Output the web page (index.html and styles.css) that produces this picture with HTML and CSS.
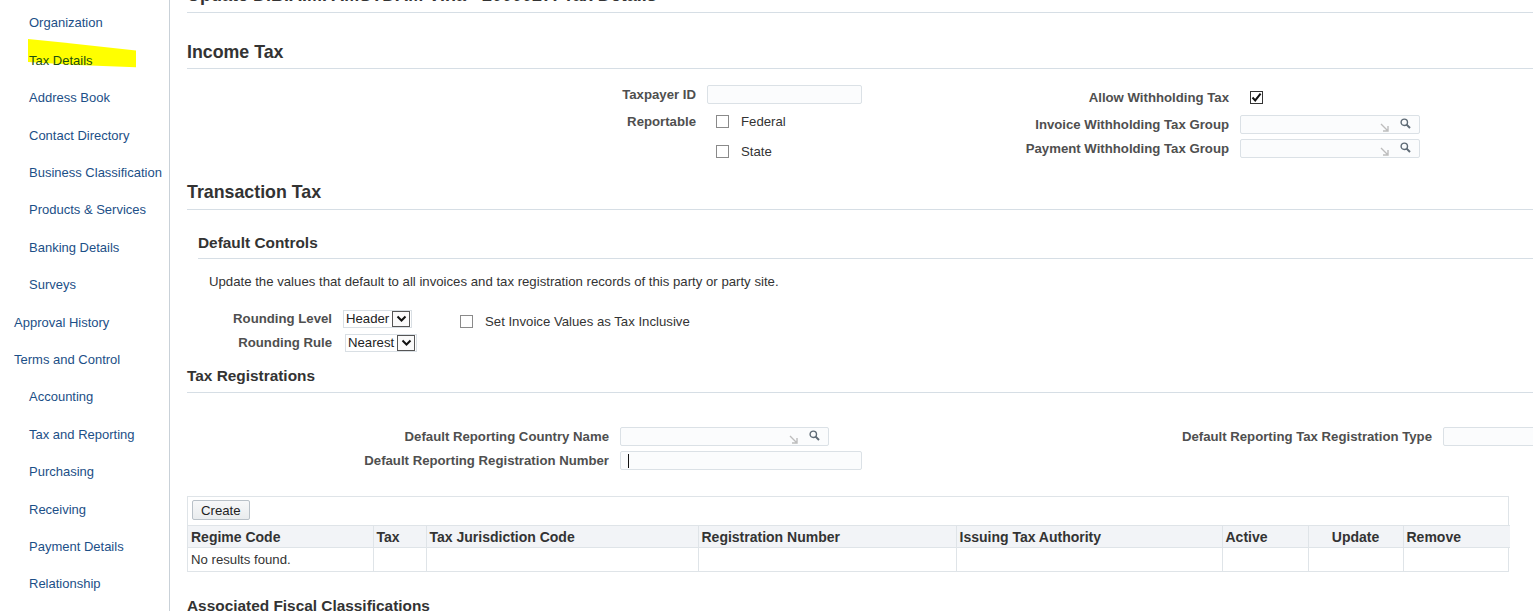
FILE: index.html
```html
<!DOCTYPE html>
<html lang="en">
<head>
    <meta charset="UTF-8">
    <meta name="viewport" content="width=device-width, initial-scale=1.0">
    <title>Tax Details</title>
    <link rel="stylesheet" href="styles.css">
</head>
<body>

    <div class="sidebar">
        <ul class="nav">
            <li class="sub"><a href="#">Organization</a></li>
            <li class="sub"><a href="#" class="current">Tax Details</a></li>
            <li class="sub"><a href="#">Address Book</a></li>
            <li class="sub"><a href="#">Contact Directory</a></li>
            <li class="sub"><a href="#">Business Classification</a></li>
            <li class="sub"><a href="#">Products &amp; Services</a></li>
            <li class="sub"><a href="#">Banking Details</a></li>
            <li class="sub"><a href="#">Surveys</a></li>
            <li><a href="#">Approval History</a></li>
            <li><a href="#">Terms and Control</a></li>
            <li class="sub"><a href="#">Accounting</a></li>
            <li class="sub"><a href="#">Tax and Reporting</a></li>
            <li class="sub"><a href="#">Purchasing</a></li>
            <li class="sub"><a href="#">Receiving</a></li>
            <li class="sub"><a href="#">Payment Details</a></li>
            <li class="sub"><a href="#">Relationship</a></li>
        </ul>
    </div>

    <div class="content">
        <h1 class="page-title">Update D.B.A.M. AMSTDAM Vina - 2000027: Tax Details</h1>

        <h2 class="section-title income-title">Income Tax</h2>

        <div class="income-form">
            <div class="form-grid income-left">
                <label class="label">Taxpayer ID</label>
                <div class="field"><span class="input input-taxpayer"></span></div>

                <label class="label row-reportable">Reportable</label>
                <div class="field row-reportable check-stack">
                    <span class="check-item"><span class="checkbox"></span>Federal</span>
                    <span class="check-item"><span class="checkbox"></span>State</span>
                </div>
            </div>

            <div class="form-grid income-right">
                <label class="label">Allow Withholding Tax</label>
                <div class="field"><span class="checkbox checked">
                    <svg width="13" height="13" viewBox="0 0 13 13"><path d="M2.5 6.5 L5.2 9.4 L10.6 2.6" fill="none" stroke="#111" stroke-width="2"/></svg>
                </span></div>

                <label class="label">Invoice Withholding Tax Group</label>
                <div class="field">
                    <span class="input lookup lookup-group">
                        <svg class="lov-arrow" width="9" height="9" viewBox="0 0 9 9"><path d="M1 1 L7.5 7.5 M3 8 L8 8 L8 3" fill="none" stroke="#bdbdbd" stroke-width="1.4"/></svg>
                        <svg class="lov-search" width="11" height="11" viewBox="0 0 11 11"><circle cx="4.3" cy="4.3" r="3.2" fill="none" stroke="#5f6b76" stroke-width="1.4"/><path d="M6.6 6.6 L10 10" stroke="#5f6b76" stroke-width="2"/></svg>
                    </span>
                </div>

                <label class="label">Payment Withholding Tax Group</label>
                <div class="field">
                    <span class="input lookup lookup-group">
                        <svg class="lov-arrow" width="9" height="9" viewBox="0 0 9 9"><path d="M1 1 L7.5 7.5 M3 8 L8 8 L8 3" fill="none" stroke="#bdbdbd" stroke-width="1.4"/></svg>
                        <svg class="lov-search" width="11" height="11" viewBox="0 0 11 11"><circle cx="4.3" cy="4.3" r="3.2" fill="none" stroke="#5f6b76" stroke-width="1.4"/><path d="M6.6 6.6 L10 10" stroke="#5f6b76" stroke-width="2"/></svg>
                    </span>
                </div>
            </div>
        </div>

        <h2 class="section-title transaction-title">Transaction Tax</h2>

        <h3 class="sub-title controls-title">Default Controls</h3>
        <p class="instruction">Update the values that default to all invoices and tax registration records of this party or party site.</p>

        <div class="rounding">
            <div class="form-grid rounding-grid">
                <label class="label">Rounding Level</label>
                <div class="field">
                    <span class="select"><span class="select-value">Header</span><span class="select-arrow"><svg width="11" height="8" viewBox="0 0 11 8"><path d="M1.5 1.5 L5.5 5.5 L9.5 1.5" fill="none" stroke="#111" stroke-width="2"/></svg></span></span>
                </div>
                <label class="label">Rounding Rule</label>
                <div class="field">
                    <span class="select select-rule"><span class="select-value">Nearest</span><span class="select-arrow"><svg width="11" height="8" viewBox="0 0 11 8"><path d="M1.5 1.5 L5.5 5.5 L9.5 1.5" fill="none" stroke="#111" stroke-width="2"/></svg></span></span>
                </div>
            </div>
            <span class="check-item inclusive"><span class="checkbox"></span>Set Invoice Values as Tax Inclusive</span>
        </div>

        <h3 class="sub-title registrations-title">Tax Registrations</h3>

        <div class="form-grid reg-form">
            <label class="label">Default Reporting Country Name</label>
            <div class="field">
                <span class="input lookup lookup-country">
                    <svg class="lov-arrow" width="9" height="9" viewBox="0 0 9 9"><path d="M1 1 L7.5 7.5 M3 8 L8 8 L8 3" fill="none" stroke="#bdbdbd" stroke-width="1.4"/></svg>
                    <svg class="lov-search" width="11" height="11" viewBox="0 0 11 11"><circle cx="4.3" cy="4.3" r="3.2" fill="none" stroke="#5f6b76" stroke-width="1.4"/><path d="M6.6 6.6 L10 10" stroke="#5f6b76" stroke-width="2"/></svg>
                </span>
            </div>
            <label class="label">Default Reporting Tax Registration Type</label>
            <div class="field"><span class="input input-type"></span></div>

            <label class="label">Default Reporting Registration Number</label>
            <div class="field"><span class="input input-number"><span class="caret"></span></span></div>
        </div>

        <div class="table-box">
            <div class="toolbar">
                <button class="button">Create</button>
            </div>
            <table class="results">
                <thead>
                    <tr>
                        <th class="col-regime">Regime Code</th>
                        <th class="col-tax">Tax</th>
                        <th class="col-jur">Tax Jurisdiction Code</th>
                        <th class="col-reg">Registration Number</th>
                        <th class="col-auth">Issuing Tax Authority</th>
                        <th class="col-active">Active</th>
                        <th class="col-update">Update</th>
                        <th class="col-remove">Remove</th>
                    </tr>
                </thead>
                <tbody>
                    <tr>
                        <td>No results found.</td>
                        <td></td>
                        <td></td>
                        <td></td>
                        <td></td>
                        <td></td>
                        <td></td>
                        <td></td>
                    </tr>
                </tbody>
            </table>
        </div>

        <h3 class="sub-title fiscal-title">Associated Fiscal Classifications</h3>
    </div>

</body>
</html>
```

FILE: styles.css
```css
* {
    margin: 0;
    padding: 0;
    box-sizing: border-box;
}

body {
    font-family: "Liberation Sans", Arial, sans-serif;
    font-size: 13.2px;
    color: #333;
    background: #fff;
    height: 100vh;
    display: flex;
    overflow: hidden;
}

/* left navigation */

.sidebar {
    width: 170px;
    flex-shrink: 0;
    border-right: 1px solid #c9d1d8;
    padding-top: 4.3px;
}

.nav {
    list-style: none;
}

.nav li {
    height: 37.4px;
    display: flex;
    align-items: center;
    padding-left: 14px;
}

.nav li.sub {
    padding-left: 29px;
}

.nav a {
    color: #1c4f87;
    text-decoration: none;
    font-size: 13px;
    white-space: nowrap;
}

.nav a.current {
    position: relative;
    color: #1c4f10;
}

.nav a.current::before {
    content: "";
    position: absolute;
    left: -1px;
    top: -14px;
    width: 108px;
    height: 29px;
    background: #ffff00;
    z-index: -1;
    clip-path: polygon(0 0, 30% 12%, 100% 40%, 100% 98%, 45% 90%, 0 80%);
}

/* main area */

.content {
    flex: 1;
    padding-left: 17px;
    overflow: hidden;
}

.page-title {
    margin-top: -16px;
    font-size: 18px;
    line-height: 22px;
    padding-bottom: 6px;
    border-bottom: 1px solid #d6dee5;
    color: #333;
    white-space: nowrap;
}

.section-title {
    font-size: 17.8px;
    line-height: 21px;
    padding-top: 1px;
    padding-bottom: 5px;
    border-bottom: 1px solid #d6dee5;
    color: #333;
}

.income-title {
    margin-top: 28px;
}

.transaction-title {
    margin-top: 20px;
    padding-bottom: 6px;
}

.sub-title {
    font-size: 15.4px;
    line-height: 18px;
    padding-top: 1px;
    padding-bottom: 6px;
    border-bottom: 1px solid #d6dee5;
    color: #333;
}

.controls-title {
    margin-top: 23px;
    margin-left: 11px;
}

.registrations-title {
    margin-top: 14px;
    padding-bottom: 7px;
}

.fiscal-title {
    margin-top: 24px;
    border-bottom: none;
}

.instruction {
    margin: 15px 0 0 22px;
    line-height: 16px;
    color: #333;
}

/* forms */

.form-grid {
    display: grid;
    column-gap: 11px;
    align-items: start;
}

.label {
    font-weight: bold;
    color: #4f4f4f;
    text-align: right;
    line-height: 19px;
    white-space: nowrap;
}

.field {
    display: flex;
    align-items: center;
    height: 19px;
}

.income-form {
    display: flex;
    gap: 11px;
    margin-top: 16px;
}

.income-left {
    grid-template-columns: 509px 155px;
}

.income-right {
    grid-template-columns: 356px 180px;
    grid-template-rows: 22px 19px 19px;
    row-gap: 5px;
    padding-top: 3px;
}

.row-reportable {
    margin-top: 8px;
}

.check-stack {
    height: auto;
    flex-direction: column;
    align-items: flex-start;
    gap: 11px;
}

.check-item {
    display: inline-flex;
    align-items: center;
    height: 19px;
    color: #333;
    white-space: nowrap;
}

.check-stack .check-item {
    padding-left: 9px;
}

.checkbox {
    display: inline-flex;
    align-items: center;
    justify-content: center;
    width: 13px;
    height: 13px;
    border: 1px solid #8a8a8a;
    background: #fff;
    margin-right: 12px;
}

.checkbox.checked {
    border-color: #333;
    margin-left: 10px;
    margin-right: 0;
    overflow: visible;
}

.checkbox.checked svg {
    margin-top: -1px;
    flex-shrink: 0;
}

.input {
    display: inline-flex;
    align-items: center;
    height: 19px;
    border: 1px solid #dbe1e6;
    border-radius: 2px;
    background: #fbfcfd;
}

.input-taxpayer {
    width: 155px;
}

.input-number {
    width: 242px;
    padding-left: 7px;
}

.input-type {
    width: 120px;
}

.caret {
    width: 1px;
    height: 14px;
    background: #111;
}

.lookup {
    justify-content: flex-end;
    padding-right: 8px;
}

.lookup-group {
    width: 180px;
}

.lookup-country {
    width: 209px;
}

.lov-arrow {
    margin-top: 5px;
    margin-right: 11px;
}

.lov-search {
    margin-top: -3px;
}

/* rounding controls */

.rounding {
    display: flex;
    align-items: flex-start;
    margin-top: 20px;
}

.rounding-grid {
    grid-template-columns: 145px 75px;
    row-gap: 6px;
}

.rounding .label,
.rounding .field {
    line-height: 18px;
    height: 18px;
}

.select {
    display: inline-flex;
    align-items: center;
    height: 18px;
    border: 1px solid #d9dfe4;
    background: #fff;
    padding-right: 1px;
}

.select-rule {
    margin-left: 2px;
}

.select-value {
    padding: 0 3px 0 2px;
    color: #222;
}

.select-arrow {
    display: inline-flex;
    align-items: center;
    justify-content: center;
    width: 18px;
    height: 16px;
    border: 1px solid #555;
    background: #fafafa;
}

.inclusive {
    margin-left: 42px;
    margin-top: 2px;
}

/* tax registrations */

.reg-form {
    grid-template-columns: 422px 242px 559px 200px;
    row-gap: 5px;
    margin-top: 34px;
}

.table-box {
    width: 1322px;
    margin-top: 26px;
    border: 1px solid #dfe4e8;
}

.toolbar {
    padding: 3px 4px 5px;
}

.button {
    font-family: "Liberation Sans", Arial, sans-serif;
    font-size: 13.2px;
    height: 20px;
    padding: 0 8px;
    color: #222;
    background: linear-gradient(#f7f8f9, #e9ecee);
    border: 1px solid #b9c1c8;
    border-radius: 2px;
}

.results {
    width: 100%;
    border-collapse: collapse;
    table-layout: fixed;
}

.results th,
.results td {
    border-top: 1px solid #dfe4e8;
    border-left: 1px solid #dfe4e8;
    text-align: left;
    padding: 0 3px;
    white-space: nowrap;
}

.results th:first-child,
.results td:first-child {
    border-left: none;
}

.results th {
    background: #f2f4f7;
    font-size: 14px;
    font-weight: bold;
    color: #333;
    height: 22px;
}

.results td {
    height: 23px;
    color: #333;
}

.results th.col-update {
    text-align: center;
}

.col-regime { width: 185px; }
.col-tax { width: 53px; }
.col-jur { width: 272px; }
.col-reg { width: 258px; }
.col-auth { width: 266px; }
.col-active { width: 86px; }
.col-update { width: 95px; }
.col-remove { width: 107px; }
```
